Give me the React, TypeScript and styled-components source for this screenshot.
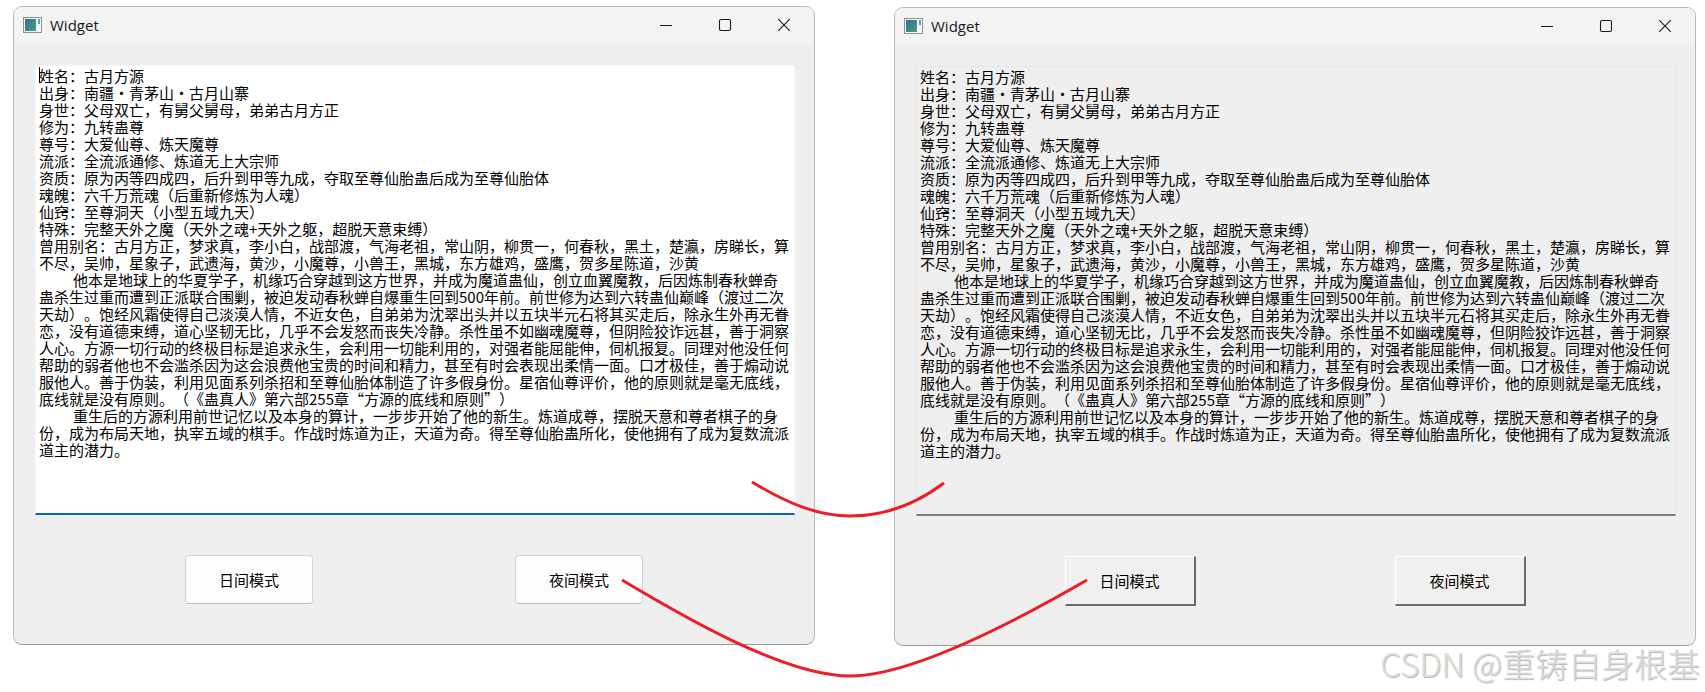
import styled, { createGlobalStyle } from 'styled-components';

const lines = [
    {text: '姓名：古月方源'},
    {text: '出身：南疆・青茅山・古月山寨'},
    {text: '身世：父母双亡，有舅父舅母，弟弟古月方正'},
    {text: '修为：九转蛊尊'},
    {text: '尊号：大爱仙尊、炼天魔尊'},
    {text: '流派：全流派通修、炼道无上大宗师'},
    {text: '资质：原为丙等四成四，后升到甲等九成，夺取至尊仙胎蛊后成为至尊仙胎体'},
    {text: '魂魄：六千万荒魂（后重新修炼为人魂）'},
    {text: '仙窍：至尊洞天（小型五域九天）'},
    {text: '特殊：完整天外之魔（天外之魂+天外之躯，超脱天意束缚）'},
    {text: '曾用别名：古月方正，梦求真，李小白，战部渡，气海老祖，常山阴，柳贯一，何春秋，黑土，楚瀛，房睇长，算'},
    {text: '不尽，吴帅，星象子，武遗海，黄沙，小魔尊，小兽王，黑城，东方雄鸡，盛鹰，贺多星陈道，沙黄'},
    {text: '他本是地球上的华夏学子，机缘巧合穿越到这方世界，并成为魔道蛊仙，创立血翼魔教，后因炼制春秋蝉奇', indent: true},
    {text: '蛊杀生过重而遭到正派联合围剿，被迫发动春秋蝉自爆重生回到500年前。前世修为达到六转蛊仙巅峰（渡过二次'},
    {text: '天劫）。饱经风霜使得自己淡漠人情，不近女色，自弟弟为沈翠出头并以五块半元石将其买走后，除永生外再无眷'},
    {text: '恋，没有道德束缚，道心坚韧无比，几乎不会发怒而丧失冷静。杀性虽不如幽魂魔尊，但阴险狡诈远甚，善于洞察'},
    {text: '人心。方源一切行动的终极目标是追求永生，会利用一切能利用的，对强者能屈能伸，伺机报复。同理对他没任何'},
    {text: '帮助的弱者他也不会滥杀因为这会浪费他宝贵的时间和精力，甚至有时会表现出柔情一面。口才极佳，善于煽动说'},
    {text: '服他人。善于伪装，利用见面系列杀招和至尊仙胎体制造了许多假身份。星宿仙尊评价，他的原则就是毫无底线，'},
    {text: '底线就是没有原则。（《蛊真人》第六部255章“方源的底线和原则”）'},
    {text: '重生后的方源利用前世记忆以及本身的算计，一步步开始了他的新生。炼道成尊，摆脱天意和尊者棋子的身', indent: true},
    {text: '份，成为布局天地，执宰五域的棋手。作战时炼道为正，天道为奇。得至尊仙胎蛊所化，使他拥有了成为复数流派'},
    {text: '道主的潜力。'},
];

const AppIcon = ({id}: {id: string}) => (
    <svg width="19" height="16" viewBox="0 0 19 16">
        <defs>
            <linearGradient id={id} x1="0" y1="0" x2="1" y2="1">
                <stop offset="0" stopColor="#2f6f9f"/>
                <stop offset="1" stopColor="#4f9f6f"/>
            </linearGradient>
        </defs>
        <rect x="0.5" y="0.5" width="18" height="15" fill="#f4f6f6" stroke="#8a9296"/>
        <rect x="2" y="2" width="11" height="12" fill={`url(#${id})`}/>
        <rect x="15" y="2" width="2" height="5" fill="#6f9aa0"/>
    </svg>
);

const WindowControls = () => (
    <Controls>
        <svg width="14" height="14" viewBox="0 0 14 14">
            <path d="M1 7.5H13" stroke="#1a1a1a" strokeWidth="1.1"/>
        </svg>
        <svg width="14" height="14" viewBox="0 0 14 14">
            <rect x="1.5" y="1.5" width="11" height="11" rx="1.6" fill="none" stroke="#1a1a1a" strokeWidth="1.1"/>
        </svg>
        <svg width="14" height="14" viewBox="0 0 14 14">
            <path d="M1.2 1.2L12.8 12.8M12.8 1.2L1.2 12.8" stroke="#1a1a1a" strokeWidth="1.1"/>
        </svg>
    </Controls>
);

const Widget = ({dark, iconId}: {dark: boolean; iconId: string}) => (
    <WindowFrame $dark={dark}>
        <TitleBar>
            <AppIcon id={iconId}/>
            <Title>Widget</Title>
            <WindowControls/>
        </TitleBar>
        <TextBox $dark={dark}>
            {lines.map((l, i) => (
                <TextLine key={i} $indent={!!l.indent}>
                    {!dark && i === 0 && <Caret/>}
                    {l.text}
                </TextLine>
            ))}
        </TextBox>
        <ButtonRow $dark={dark}>
            <ModeButton $dark={dark}>日间模式</ModeButton>
            <ModeButton $dark={dark}>夜间模式</ModeButton>
        </ButtonRow>
    </WindowFrame>
);

export default function App() {
    return (
        <Page lang="zh-CN">
            <GlobalStyle/>
            <Widget dark={false} iconId="qt-a"/>
            <Widget dark={true} iconId="qt-b"/>
            <Arrows width="1705" height="692" viewBox="0 0 1705 692">
                <path d="M752 482C790 505 820 516 850 516C885 516 915 505 944 483" fill="none" stroke="#ee1c25" strokeWidth="3"/>
                <path d="M622 580C684 617 785 676 850 676C915 676 1023 617 1087 580" fill="none" stroke="#ee1c25" strokeWidth="3"/>
            </Arrows>
            <Watermark>CSDN @重铸自身根基</Watermark>
        </Page>
    );
}

const GlobalStyle = createGlobalStyle`
    html, body {
        margin: 0;
        padding: 0;
        background: #fff;
    }
`

const Page = styled.div`
    position: relative;
    display: flex;
    align-items: flex-start;
    gap: 79px;
    width: 1705px;
    height: 692px;
    padding: 6px 0 0 13px;
    box-sizing: border-box;
    overflow: hidden;
    background: #fff;
`

const WindowFrame = styled.div<{$dark: boolean}>`
    display: flex;
    flex-direction: column;
    width: 802px;
    height: 639px;
    margin-top: ${p => p.$dark ? '1px' : '0'};
    box-sizing: border-box;
    background: #efefef;
    border: 1px solid #b9b9b9;
    border-bottom-color: #9a9a9a;
    border-radius: 9px;
    overflow: hidden;
`

const TitleBar = styled.div`
    display: flex;
    align-items: center;
    flex: none;
    height: 37px;
    padding: 0 23px 2px 9px;
    box-sizing: border-box;
    background: #f3f3f3;
`

const Title = styled.span`
    margin-left: 8px;
    font-family: "Open Sans", "Noto Sans", sans-serif;
    font-size: 15px;
    color: #1a1a1a;
`

const Controls = styled.div`
    display: flex;
    align-items: center;
    gap: 45px;
    margin-left: auto;
`

const TextBox = styled.div<{$dark: boolean}>`
    flex: none;
    height: 450px;
    margin: 21px 19px 0 21px;
    padding: 1px 0 0 3px;
    box-sizing: border-box;
    font-family: "Noto Sans CJK SC", sans-serif;
    font-size: 15px;
    line-height: 17px;
    text-spacing-trim: space-all;
    color: #000;
    background: ${p => p.$dark ? '#efefef' : '#fff'};
    border: 1px solid ${p => p.$dark ? '#e6e6e6' : '#f6f6f6'};
    border-bottom: 2px solid ${p => p.$dark ? '#7d7d7d' : '#0067c0'};
`

const TextLine = styled.div<{$indent: boolean}>`
    height: 17px;
    padding-left: ${p => p.$indent ? '34px' : '0'};
    white-space: nowrap;
`

const Caret = styled.span`
    display: inline-block;
    width: 1px;
    height: 16px;
    margin-right: -1px;
    vertical-align: top;
    background: #000;
`

const ButtonRow = styled.div<{$dark: boolean}>`
    display: flex;
    justify-content: center;
    gap: ${p => p.$dark ? '199px' : '202px'};
    margin-top: 40px;
`

const ModeButton = styled.button<{$dark: boolean}>`
    width: ${p => p.$dark ? '131px' : '128px'};
    height: ${p => p.$dark ? '50px' : '49px'};
    padding: 0;
    font-family: "Noto Sans CJK SC", sans-serif;
    font-size: 15px;
    color: #000;
    background: ${p => p.$dark ? '#f0f0f0' : '#fdfdfd'};
    border-style: solid;
    border-width: ${p => p.$dark ? '1px 2px 2px 1px' : '1px'};
    border-color: ${p => p.$dark ? '#fff #696969 #696969 #fff' : '#d2d2d2 #d2d2d2 #bcbcbc #d2d2d2'};
    border-radius: ${p => p.$dark ? '0' : '4px'};
`

const Arrows = styled.svg`
    position: absolute;
    top: 0;
    left: 0;
    pointer-events: none;
`

const Watermark = styled.div`
    position: absolute;
    right: 5px;
    top: 641px;
    font-family: "Noto Sans CJK SC", sans-serif;
    font-size: 33px;
    font-weight: 300;
    line-height: 44px;
    white-space: nowrap;
    color: #dcdcdc;
    text-shadow: 1px 1px 1px #b4b4b4;
`
